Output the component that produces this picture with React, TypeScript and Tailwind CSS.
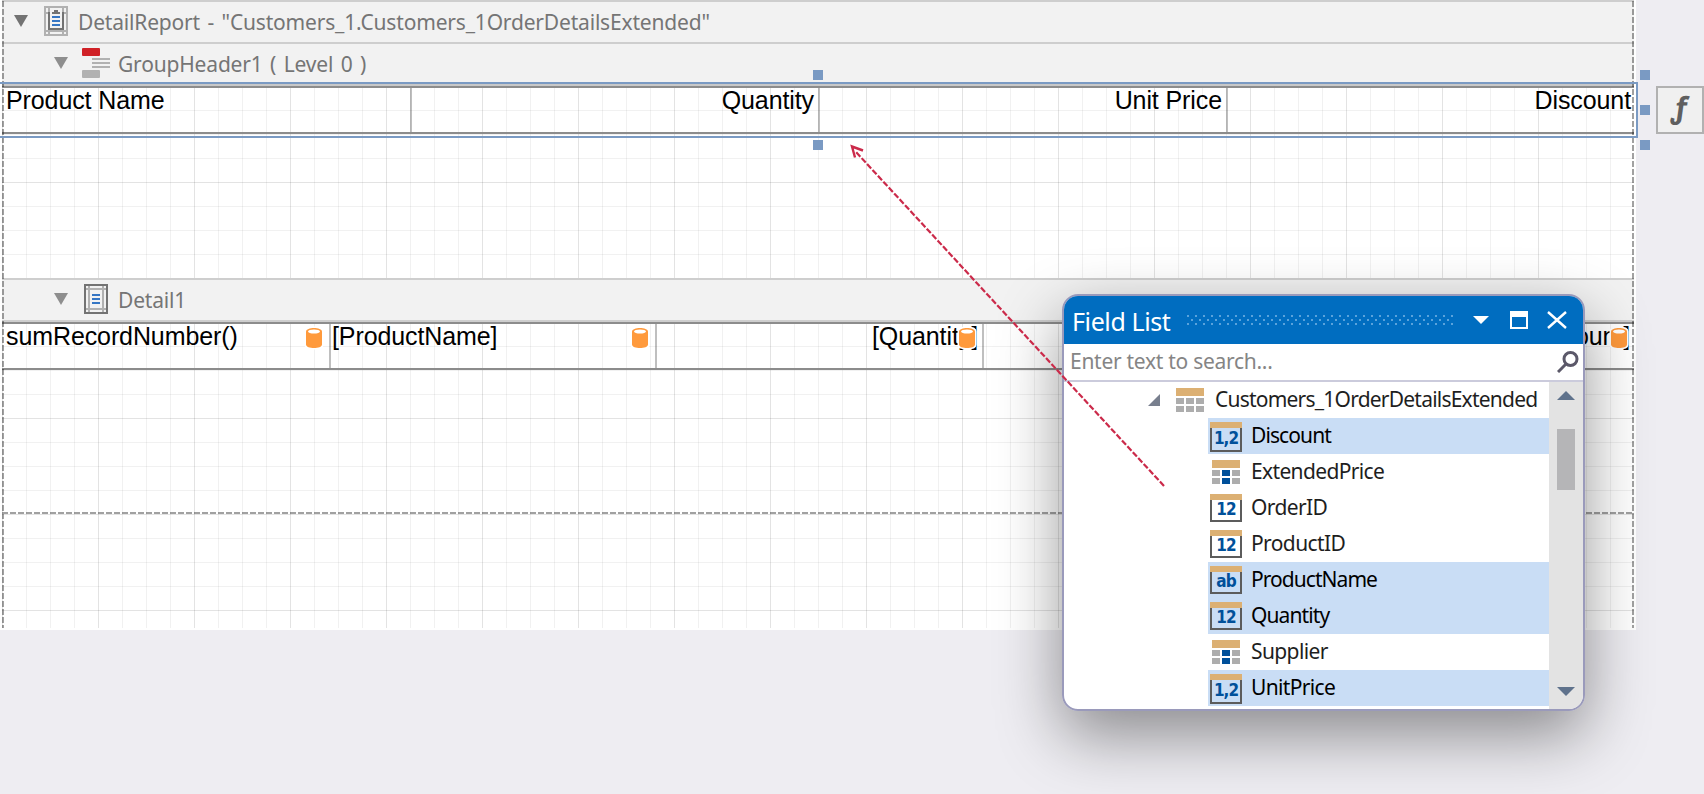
import { clsx } from "clsx";

type FieldKind = "decimal" | "integer" | "text" | "column";

const fields: { name: string; kind: FieldKind; selected?: boolean; tracking: string }[] = [
  { name: "Discount", kind: "decimal", selected: true, tracking: "tracking-[-0.9px]" },
  { name: "ExtendedPrice", kind: "column", tracking: "tracking-[-0.65px]" },
  { name: "OrderID", kind: "integer", tracking: "tracking-[-0.6px]" },
  { name: "ProductID", kind: "integer", tracking: "tracking-[-0.6px]" },
  { name: "ProductName", kind: "text", selected: true, tracking: "tracking-[-0.95px]" },
  { name: "Quantity", kind: "integer", selected: true, tracking: "tracking-[-0.9px]" },
  { name: "Supplier", kind: "column", tracking: "tracking-[-0.6px]" },
  { name: "UnitPrice", kind: "decimal", selected: true, tracking: "tracking-[-0.65px]" },
];

const Triangle = ({ dark }: { dark?: boolean }) => (
  <svg width="14" height="12" viewBox="0 0 14 12" className="shrink-0 -translate-y-px">
    <path d="M0 0h14L7 12z" fill={dark ? "#737373" : "#8e8e8e"} />
  </svg>
);

const ReportIcon = () => (
  <svg width="24" height="30" viewBox="0 0 24 30" className="shrink-0">
    <path
      d="M1 1h22v28H1zM5 1v28M19 1v28M1 7h22M1 25h22"
      fill="none"
      stroke="#b1b1b1"
      strokeWidth="2"
    />
    <path d="M5 7h14v16H5z" fill="#f2f2f2" stroke="#737373" strokeWidth="2" />
    <path d="M6 6h12v2H6z" fill="#f2f2f2" />
    <path d="M8 8V6h2V4h4v2h2v2z" fill="#737373" />
    <path d="M8 11h8M8 15h8M8 19h8" stroke="#3576c4" strokeWidth="2" />
  </svg>
);

const DetailIcon = () => (
  <svg width="24" height="30" viewBox="0 0 24 30" className="shrink-0">
    <path d="M5 1v28M19 1v28M1 5h22M1 25h22" stroke="#b1b1b1" strokeWidth="2" />
    <path d="M1 1h22v28H1z" fill="none" stroke="#737373" strokeWidth="2" />
    <path d="M8 11h8M8 15h8M8 19h8" stroke="#3576c4" strokeWidth="2" />
  </svg>
);

const GroupIcon = () => (
  <svg width="28" height="30" viewBox="0 0 28 30" className="shrink-0">
    <rect width="18" height="8" rx="1" fill="#d02127" />
    <rect y="22" width="18" height="8" rx="1" fill="#b1b1b1" />
    <path d="M10 11h18M10 15h18M10 19h18" stroke="#b1b1b1" strokeWidth="2" />
  </svg>
);

const DatabaseIcon = () => (
  <svg width="20" height="24" viewBox="0 0 20 24" className="absolute right-[5px] top-[2px]">
    <path
      d="M2 5.5C2 .8 18 .8 18 5.5v13c0 4.7-16 4.7-16 0z"
      fill="#ff9a3c"
      stroke="#fff"
      strokeWidth="3"
      paintOrder="stroke"
    />
    <ellipse cx="10" cy="5.5" rx="6" ry="2" fill="#fff" />
  </svg>
);

const TableIcon = ({ column }: { column?: boolean }) => (
  <svg width="28" height="24" viewBox="0 0 28 24" className="shrink-0">
    <path d="M0 0h28v8H0z" fill="#dcb073" />
    <path d="M0 10h8v6H0zM20 10h8v6h-8zM0 18h8v6H0zM20 18h8v6h-8z" fill="#adadad" />
    <path d="M10 10h8v6h-8zM10 18h8v6h-8z" fill={column ? "#00509a" : "#adadad"} />
  </svg>
);

const FieldIcon = ({ kind }: { kind: FieldKind }) => {
  if (kind === "column") {
    return (
      <span className="flex w-8 justify-center pt-1.5">
        <TableIcon column />
      </span>
    );
  }
  return (
    <span
      className={clsx(
        "relative mt-1 flex w-8 items-center justify-center border-x-2 border-b-2 border-[#5c5c5c] pt-[5px] font-['DejaVu_Sans_Condensed','DejaVu_Sans',sans-serif] text-[17px] font-bold leading-none tracking-[-1px] text-[#00509a]",
        kind === "decimal" ? "h-[30px]" : "h-7",
      )}
    >
      <span className="absolute -inset-x-0.5 top-0 h-1.5 bg-[#dcb073]" />
      {kind === "decimal" ? "1,2" : kind === "integer" ? "12" : "ab"}
    </span>
  );
};

const Handle = ({ className }: { className: string }) => (
  <div className={clsx("absolute size-2.5 bg-[#7a9ac3]", className)} />
);

const grid =
  "bg-[repeating-linear-gradient(90deg,rgba(0,0,0,0.06)_0_1px,transparent_1px_96px),repeating-linear-gradient(180deg,rgba(0,0,0,0.06)_0_1px,transparent_1px_96px),repeating-linear-gradient(90deg,rgba(0,0,0,0.055)_0_1px,transparent_1px_24px),repeating-linear-gradient(180deg,rgba(0,0,0,0.055)_0_1px,transparent_1px_24px)]";

const bandTitle =
  "translate-y-px whitespace-pre font-['Noto_Sans',sans-serif] text-[21px] tracking-[-0.18px] text-[#757575] [word-spacing:2.2px]";
const cell =
  "relative h-full border-r-2 border-black/25 px-1 text-[25px] leading-[25px] tracking-[-0.1px] last:border-r-0";

const Designer = () => (
  <div className="relative h-[630px] w-[1636px] bg-white">
    <div className="ml-0.5 h-[628px] w-[1632px]">
      <div className="flex h-11 items-center border-y-2 border-[#cecece] bg-[#f2f2f2] pl-3">
        <Triangle dark />
        <span className="ml-4 flex -translate-y-px">
          <ReportIcon />
        </span>
        <span className={clsx(bandTitle, "ml-2.5")}>
          DetailReport - "Customers_1.Customers_1OrderDetailsExtended"
        </span>
      </div>
      <div className="flex h-[42px] items-center border-b-2 border-[#c8c8c8] bg-[#f2f2f2] pl-[52px]">
        <Triangle />
        <span className="ml-3.5 flex -translate-y-px">
          <GroupIcon />
        </span>
        <span className={clsx(bandTitle, "ml-2")}>GroupHeader1 ( Level 0 )</span>
      </div>
      <div className={clsx("h-[192px]", grid)}>
        <div className="grid h-12 grid-cols-[410px_408px_408px_1fr] border-y-2 border-[#8c8c8c] text-right">
          <div className={clsx(cell, "text-left")}>Product Name</div>
          <div className={cell}>Quantity</div>
          <div className={cell}>Unit Price</div>
          <div className={clsx(cell, "pr-[3px]")}>Discount</div>
        </div>
      </div>
      <div className="flex h-11 items-center border-y-2 border-[#cecece] bg-[#f2f2f2] pl-[52px]">
        <Triangle />
        <span className="ml-4 flex -translate-y-px">
          <DetailIcon />
        </span>
        <span className={clsx(bandTitle, "ml-2.5")}>Detail1</span>
      </div>
      <div className={clsx("h-[192px]", grid)}>
        <div className="grid h-12 grid-cols-[329px_326px_327px_327px_1fr] border-y-2 border-[#8c8c8c]">
          <div className={cell}>
            sumRecordNumber()
            <DatabaseIcon />
          </div>
          <div className={clsx(cell, "pl-px")}>
            [ProductName]
            <DatabaseIcon />
          </div>
          <div className={clsx(cell, "text-right")}>
            [Quantity]
            <DatabaseIcon />
          </div>
          <div className={cell} />
          <div className={clsx(cell, "text-right")}>
            [Discount]
            <DatabaseIcon />
          </div>
        </div>
      </div>
      <div className={clsx("h-[114px]", grid)} />
    </div>

    {/* page margins and the bottom edge of the detail band */}
    <svg className="absolute left-0 top-0" width="1636" height="628" fill="none">
      <path
        d="M3 1V628M1633 1V628M2 513H1634"
        stroke="#000"
        strokeOpacity="0.37"
        strokeWidth="2"
        strokeDasharray="6 2"
      />
    </svg>
  </div>
);

const FieldList = () => (
  <section className="absolute left-[1062px] top-[294px] flex h-[417px] w-[523px] flex-col overflow-hidden rounded-2xl border-2 border-[#9a9abb] bg-white">
    <header className="flex h-12 shrink-0 items-center bg-[#006dc0] pl-2 text-white">
      <h2 className="w-[115px] shrink-0 translate-y-0.5 whitespace-nowrap font-['Noto_Sans',sans-serif] text-[25px] tracking-[-0.4px]">
        Field List
      </h2>
      <svg width="266" height="10" className="shrink-0">
        <defs>
          <pattern id="grip" width="8" height="8" patternUnits="userSpaceOnUse">
            <path d="M0 0h2v2H0zM4 4h2v2H4z" fill="#5aa3dc" />
          </pattern>
        </defs>
        <rect width="266" height="10" fill="url(#grip)" />
      </svg>
      <svg width="94" height="18" viewBox="0 0 94 18" className="ml-5 shrink-0">
        <path d="M0 5h16l-8 8z" fill="#fff" />
        <path d="M37 0h18v18H37zM39 6v10h14V6z" fill="#fff" fillRule="evenodd" />
        <path d="M75 1l18 16M93 1L75 17" stroke="#fff" strokeWidth="2.4" />
      </svg>
    </header>
    <div className="flex h-[38px] shrink-0 items-center justify-between border-b-2 border-[#cbcbdc] pl-1.5 pr-1">
      <span className="font-['Noto_Sans',sans-serif] text-[21px] tracking-[-0.28px] text-[#858585]">
        Enter text to search...
      </span>
      <svg width="22" height="22" viewBox="0 0 22 22" fill="none" stroke="#5b5869">
        <circle cx="13.5" cy="8" r="6.5" strokeWidth="3" />
        <path d="M9 13l-8 8" strokeWidth="3" />
      </svg>
    </div>
    <div className="flex min-h-0 flex-1 font-['Noto_Sans',sans-serif] text-[21px] text-[#1e1e1e]">
      <div className="min-w-0 flex-1">
        <div className="flex h-9 pl-[84px]">
          <svg width="12" height="12" className="mt-3 shrink-0">
            <path d="M12 0v12H0z" fill="#787f8e" />
          </svg>
          <span className="ml-4 mt-1.5">
            <TableIcon />
          </span>
          <span className="ml-[11px] leading-[35px] tracking-[-0.78px]">
            Customers_1OrderDetailsExtended
          </span>
        </div>
        {fields.map((field) => (
          <div
            key={field.name}
            className={clsx(
              "ml-36 flex h-9 pl-0.5",
              field.selected && "bg-[#c9ddf5] text-black",
            )}
          >
            <FieldIcon kind={field.kind} />
            <span className={clsx("ml-[9px] leading-[35px]", field.tracking)}>{field.name}</span>
          </div>
        ))}
      </div>
      <div className="flex w-[34px] shrink-0 flex-col items-center bg-[#e3e3e3]">
        <svg width="18" height="9" className="mt-[9px]">
          <path d="M0 9L9 0l9 9z" fill="#5f728c" />
        </svg>
        <div className="mt-[29px] h-[61px] w-[18px] bg-[#b5b5b7]" />
        <svg width="18" height="9" className="mb-[13px] mt-auto">
          <path d="M0 0h18L9 9z" fill="#5f728c" />
        </svg>
      </div>
    </div>
  </section>
);

export default function App() {
  return (
    <main className="relative h-[794px] w-[1704px] overflow-hidden bg-[#eeedf2] font-['Liberation_Sans',sans-serif] text-black">
      <Designer />

      <div className="absolute -left-1 top-[82px] h-14 w-[1642px] border-2 border-[#7a9ac3]" />
      <Handle className="left-[813px] top-[70px]" />
      <Handle className="left-[813px] top-[140px]" />
      <Handle className="left-[1640px] top-[70px]" />
      <Handle className="left-[1640px] top-[105px]" />
      <Handle className="left-[1640px] top-[140px]" />
      <button className="absolute left-[1656px] top-[86px] flex size-12 items-center justify-center border-2 border-[#b1b1b1] bg-[#f0f0f0] pb-1.5 pr-0.5 font-['Noto_Sans',sans-serif] text-[29px] font-bold text-[#5f5f5f]">
        <span className="-skew-x-8">ƒ</span>
      </button>

      <div className="absolute left-[1062px] top-[294px] h-[417px] w-[523px] rounded-2xl shadow-[0_24px_64px_rgba(0,0,0,0.42)]" />
      <FieldList />

      <svg className="pointer-events-none absolute left-0 top-0" width="1704" height="794" fill="none">
        <path d="M1164 486L856 152" stroke="#cb2a4a" strokeWidth="2.2" strokeDasharray="6 2" />
        <path d="M863 150.5L852 146.5l3 11" stroke="#cb2a4a" strokeWidth="2.4" />
      </svg>
    </main>
  );
}
